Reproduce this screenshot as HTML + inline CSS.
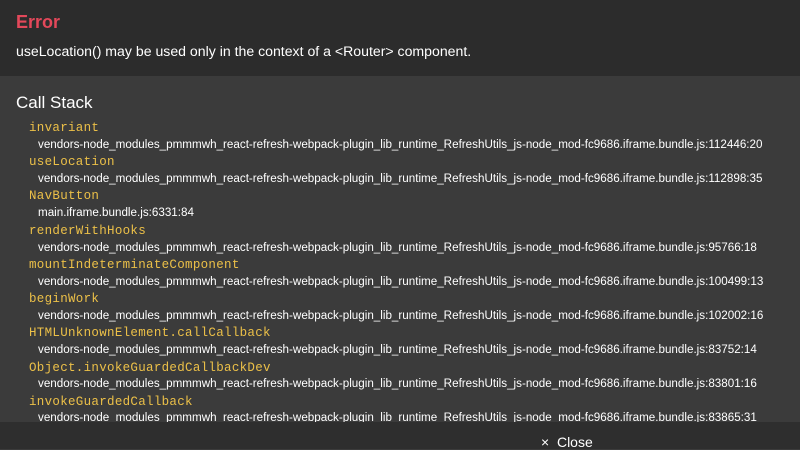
<!DOCTYPE html>
<html><head><meta charset="utf-8"><style>
body{margin:0;width:800px;height:449px;overflow:hidden;background:#3b3b3b;font-family:"Liberation Sans",sans-serif;position:relative}
.top{position:absolute;left:0;top:0;width:800px;height:76px;background:#2c2c2c}
.err{position:absolute;left:16px;top:12px;color:#e3485a;font-size:18px;font-weight:bold}
.msg{position:absolute;left:16px;top:43px;color:#fff;font-size:14.1px}
.cs{position:absolute;left:16px;top:93px;color:#fff;font-size:17px}
.fn{position:absolute;left:29px;color:#ecc048;font-family:"Liberation Mono",monospace;font-size:12.5px;letter-spacing:0.3px}
.fl{position:absolute;left:38px;color:#fff;font-size:11.65px}
.foot{position:absolute;left:0;top:422px;width:800px;height:27px;background:#2e2e2e}
.close{position:absolute;left:541px;top:434px;color:#fff;font-size:14px}
</style></head><body>
<div class="top"></div>
<div class="err">Error</div>
<div class="msg">useLocation() may be used only in the context of a &lt;Router&gt; component.</div>
<div class="cs">Call Stack</div>
<div class="fn" style="top:121px">invariant</div>
<div class="fl" style="top:138px">vendors-node_modules_pmmmwh_react-refresh-webpack-plugin_lib_runtime_RefreshUtils_js-node_mod-fc9686.iframe.bundle.js:112446:20</div>
<div class="fn" style="top:155px">useLocation</div>
<div class="fl" style="top:172px">vendors-node_modules_pmmmwh_react-refresh-webpack-plugin_lib_runtime_RefreshUtils_js-node_mod-fc9686.iframe.bundle.js:112898:35</div>
<div class="fn" style="top:189px">NavButton</div>
<div class="fl" style="top:206px">main.iframe.bundle.js:6331:84</div>
<div class="fn" style="top:224px">renderWithHooks</div>
<div class="fl" style="top:241px">vendors-node_modules_pmmmwh_react-refresh-webpack-plugin_lib_runtime_RefreshUtils_js-node_mod-fc9686.iframe.bundle.js:95766:18</div>
<div class="fn" style="top:258px">mountIndeterminateComponent</div>
<div class="fl" style="top:275px">vendors-node_modules_pmmmwh_react-refresh-webpack-plugin_lib_runtime_RefreshUtils_js-node_mod-fc9686.iframe.bundle.js:100499:13</div>
<div class="fn" style="top:292px">beginWork</div>
<div class="fl" style="top:309px">vendors-node_modules_pmmmwh_react-refresh-webpack-plugin_lib_runtime_RefreshUtils_js-node_mod-fc9686.iframe.bundle.js:102002:16</div>
<div class="fn" style="top:326px">HTMLUnknownElement.callCallback</div>
<div class="fl" style="top:343px">vendors-node_modules_pmmmwh_react-refresh-webpack-plugin_lib_runtime_RefreshUtils_js-node_mod-fc9686.iframe.bundle.js:83752:14</div>
<div class="fn" style="top:361px">Object.invokeGuardedCallbackDev</div>
<div class="fl" style="top:377px">vendors-node_modules_pmmmwh_react-refresh-webpack-plugin_lib_runtime_RefreshUtils_js-node_mod-fc9686.iframe.bundle.js:83801:16</div>
<div class="fn" style="top:395px">invokeGuardedCallback</div>
<div class="fl" style="top:411px">vendors-node_modules_pmmmwh_react-refresh-webpack-plugin_lib_runtime_RefreshUtils_js-node_mod-fc9686.iframe.bundle.js:83865:31</div>
<div class="foot"></div>
<div class="close">× &nbsp;Close</div>
</body></html>
